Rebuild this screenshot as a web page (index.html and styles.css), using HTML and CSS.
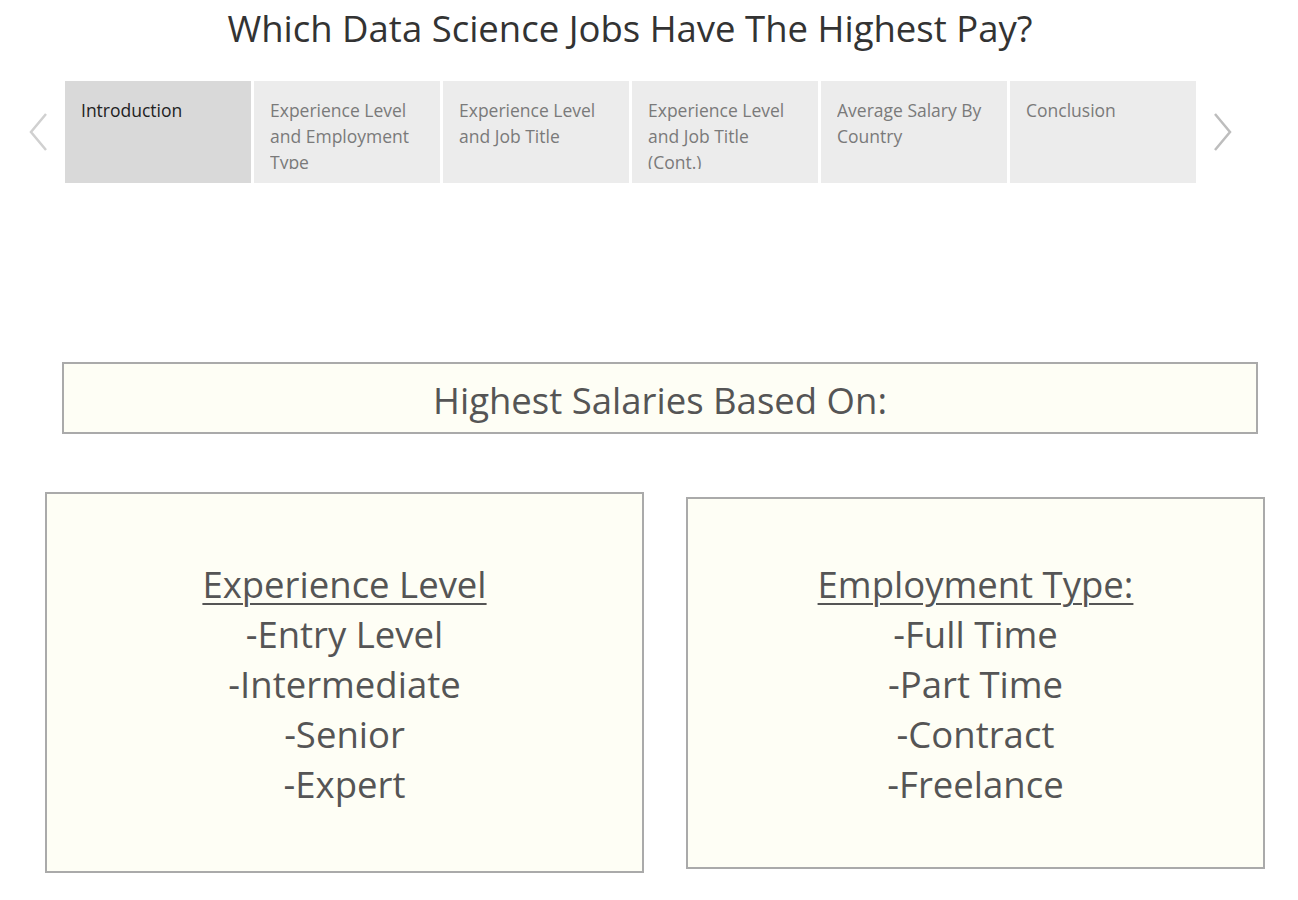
FILE: index.html
```html
<!DOCTYPE html>
<html>
<head>
<meta charset="utf-8">
<link rel="stylesheet" href="styles.css">
</head>
<body>
<div class="page">
  <h1 class="title">Which Data Science Jobs Have The Highest Pay?</h1>
  <nav class="story">
    <span class="arrow arrow-left">
      <svg width="20" height="40" viewBox="0 0 20 40"><path d="M18 2 L3 20 L18 38" fill="none" stroke="#d0d0d0" stroke-width="2.5"/></svg>
    </span>
    <div class="tabs">
      <div class="tab active"><div class="tab-text">Introduction</div></div>
      <div class="tab"><div class="tab-text">Experience Level and Employment Type</div></div>
      <div class="tab"><div class="tab-text">Experience Level and Job Title</div></div>
      <div class="tab"><div class="tab-text">Experience Level and Job Title (Cont.)</div></div>
      <div class="tab"><div class="tab-text">Average Salary By Country</div></div>
      <div class="tab"><div class="tab-text">Conclusion</div></div>
    </div>
    <span class="arrow arrow-right">
      <svg width="20" height="40" viewBox="0 0 20 40"><path d="M2 2 L17 20 L2 38" fill="none" stroke="#bdbdbd" stroke-width="2.5"/></svg>
    </span>
  </nav>
  <section class="header-box">Highest Salaries Based On:</section>
  <div class="cards">
    <div class="card card-left">
      <div class="card-text">
        <div class="heading">Experience Level</div>
        <div>-Entry Level</div>
        <div>-Intermediate</div>
        <div>-Senior</div>
        <div>-Expert</div>
      </div>
    </div>
    <div class="card card-right">
      <div class="card-text">
        <div class="heading">Employment Type:</div>
        <div>-Full Time</div>
        <div>-Part Time</div>
        <div>-Contract</div>
        <div>-Freelance</div>
      </div>
    </div>
  </div>
</div>
</body>
</html>
```
FILE: styles.css
```css
html, body {
  margin: 0;
  padding: 0;
  background: #ffffff;
}
body {
  font-family: "Open Sans", "Noto Sans", sans-serif;
}
.page {
  width: 1298px;
  height: 900px;
  display: flex;
  flex-direction: column;
}
.title {
  margin: 0;
  height: 56px;
  width: 1260px;
  text-align: center;
  font-size: 36.5px;
  font-weight: 400;
  line-height: 56px;
  color: #333333;
}
.story {
  margin-top: 25px;
  display: flex;
  align-items: center;
  height: 102px;
}
.arrow {
  display: flex;
  justify-content: flex-start;
  align-items: center;
  height: 102px;
}
.arrow-left {
  padding-left: 28px;
  width: 37px;
}
.arrow-right {
  padding-left: 17px;
  width: 48px;
}
.tabs {
  display: flex;
  gap: 3px;
}
.tab {
  width: 186px;
  height: 102px;
  background: #ececec;
  box-sizing: border-box;
  padding: 16px 14px 0 16px;
}
.tab.active {
  background: #d9d9d9;
}
.tab-text {
  font-size: 17.5px;
  line-height: 26px;
  color: #7a7a7a;
  height: 72px;
  overflow: hidden;
}
.tab.active .tab-text {
  color: #222222;
}
.header-box {
  margin: 179px 0 0 62px;
  width: 1196px;
  height: 72px;
  box-sizing: border-box;
  border: 2px solid #aaaaaa;
  background: #fefef5;
  display: flex;
  align-items: center;
  justify-content: center;
  font-size: 36.5px;
  color: #555555;
  padding-top: 3px;
}
.cards {
  display: flex;
  align-items: flex-start;
  margin-top: 58px;
}
.card {
  box-sizing: border-box;
  border: 2px solid #aaaaaa;
  background: #fefef5;
  display: flex;
  align-items: center;
  justify-content: center;
}
.card-left {
  margin-left: 45px;
  width: 599px;
  height: 381px;
}
.card-right {
  margin-left: 42px;
  margin-top: 5px;
  width: 579px;
  height: 372px;
}
.card-text {
  text-align: center;
  font-size: 36.5px;
  line-height: 50px;
  color: #555555;
  padding-top: 2px;
}
.heading {
  text-decoration: underline;
  text-decoration-thickness: 2px;
  text-underline-offset: 5px;
}
```
